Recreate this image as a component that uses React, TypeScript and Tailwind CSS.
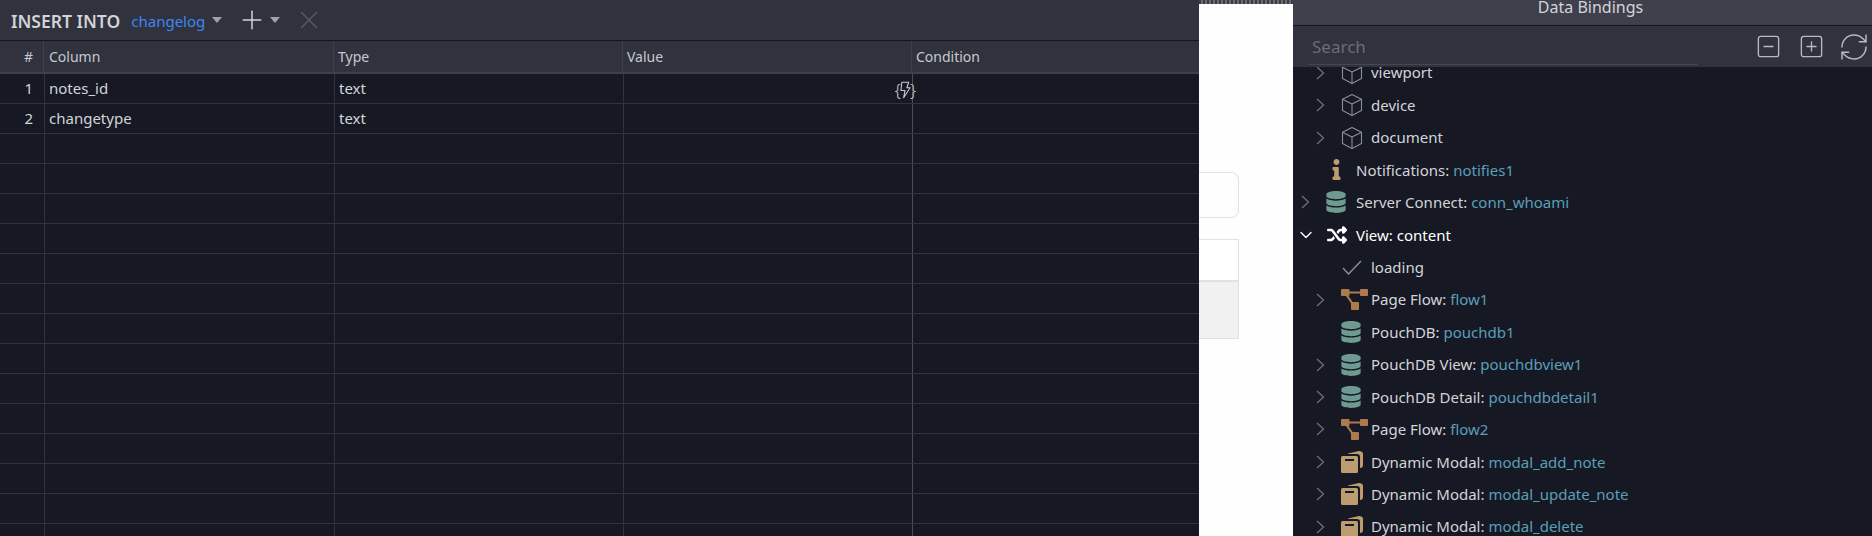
import { ChevronDown, Plus, RefreshCw, SquareMinus, SquarePlus, X } from 'lucide-react';
import { FaDatabase, FaInfo } from 'react-icons/fa';
import { FaShuffle } from 'react-icons/fa6';

type Kind = 'cube' | 'info' | 'db' | 'shuffle' | 'check' | 'flow' | 'modal';

type TreeItem = {
  label: string;
  name?: string;
  kind: Kind;
  level: 0 | 1;
  arrow?: boolean;
  open?: boolean;
};

const treeItems: TreeItem[] = [
  { label: 'viewport', kind: 'cube', level: 1, arrow: true },
  { label: 'device', kind: 'cube', level: 1, arrow: true },
  { label: 'document', kind: 'cube', level: 1, arrow: true },
  { label: 'Notifications: ', name: 'notifies1', kind: 'info', level: 0 },
  { label: 'Server Connect: ', name: 'conn_whoami', kind: 'db', level: 0, arrow: true },
  { label: 'View: content', kind: 'shuffle', level: 0, arrow: true, open: true },
  { label: 'loading', kind: 'check', level: 1 },
  { label: 'Page Flow: ', name: 'flow1', kind: 'flow', level: 1, arrow: true },
  { label: 'PouchDB: ', name: 'pouchdb1', kind: 'db', level: 1 },
  { label: 'PouchDB View: ', name: 'pouchdbview1', kind: 'db', level: 1, arrow: true },
  { label: 'PouchDB Detail: ', name: 'pouchdbdetail1', kind: 'db', level: 1, arrow: true },
  { label: 'Page Flow: ', name: 'flow2', kind: 'flow', level: 1, arrow: true },
  { label: 'Dynamic Modal: ', name: 'modal_add_note', kind: 'modal', level: 1, arrow: true },
  { label: 'Dynamic Modal: ', name: 'modal_update_note', kind: 'modal', level: 1, arrow: true },
  { label: 'Dynamic Modal: ', name: 'modal_delete', kind: 'modal', level: 1, arrow: true },
];

const rows = Array.from({ length: 16 }, (_, i) => {
  if (i === 0) return { no: '1', column: 'notes_id', type: 'text' };
  if (i === 1) return { no: '2', column: 'changetype', type: 'text' };
  return { no: '', column: '', type: '' };
});

function Caret({ className }: { className: string }) {
  return (
    <svg viewBox="0 0 10 6" className={className} fill="currentColor">
      <path d="M0 0h10L5 6z" />
    </svg>
  );
}

function ChevronRightThin() {
  return (
    <svg viewBox="0 0 9 14" className="h-[14px] w-[9px] text-[#6d6f78]" fill="none" stroke="currentColor" strokeWidth="1.3">
      <path d="M1 1l6.500 6L1 13" />
    </svg>
  );
}

function CubeIcon() {
  return (
    <svg viewBox="0 0 22 24" className="h-[24px] w-[22px] text-[#8d8f96]" fill="none" stroke="currentColor" strokeWidth="1.1" strokeLinejoin="round">
      <path d="M11 1.500l9.500 4.700v11.400L11 22.500l-9.500-4.900V6.200z" />
      <path d="M1.500 6.200L11 11l9.500-4.800M11 11v11.500" />
    </svg>
  );
}

function FlowIcon() {
  return (
    <svg viewBox="0 0 27 21" className="h-[21px] w-[27px] text-[#ad7a4d]" fill="currentColor">
      <rect x="0" y="0" width="8.500" height="7" rx="1" />
      <rect x="19" y="0" width="8" height="7" rx="1" />
      <rect x="10" y="13" width="8" height="8" rx="1" />
      <path d="M8 2.500h11V4.500H8zM5 7h2.500l4.500 6.500-1.500 1.500z" />
    </svg>
  );
}

function ModalIcon() {
  return (
    <svg viewBox="0 0 22 22" className="h-[22px] w-[22px] text-[#bd9c70]" fill="currentColor">
      <path d="M7 2.500L18 0c2 0 4 .8 4 3v11c0 2-1 3-3 3V6c0-2-1-3-3-3H7z" />
      <rect x="0" y="5" width="17" height="17" rx="1.500" />
      <rect x="4" y="8" width="9" height="2" fill="#161924" />
    </svg>
  );
}

function TreeIcon({ kind }: { kind: Kind }) {
  switch (kind) {
    case 'cube':
      return <CubeIcon />;
    case 'info':
      return <FaInfo className="ml-[5px] h-[21px] w-[11px] text-[#bd9c70]" />;
    case 'db':
      return <FaDatabase className="h-[22px] w-[20px] text-[#6f9a92]" />;
    case 'shuffle':
      return <FaShuffle className="h-[20px] w-[22px] text-white" />;
    case 'check':
      return (
        <svg viewBox="0 0 20 15" className="ml-[1px] h-[15px] w-[20px] text-[#8d8f96]" fill="none" stroke="currentColor" strokeWidth="1.4">
          <path d="M1 8l5.500 6L19 1" />
        </svg>
      );
    case 'flow':
      return <FlowIcon />;
    case 'modal':
      return <ModalIcon />;
  }
}

function TreeRow({ item }: { item: TreeItem }) {
  return (
    <div className={`flex h-[32.43px] shrink-0 items-center ${item.level === 1 ? 'pl-[23px]' : 'pl-[8px]'}`}>
      <div className="flex w-[25px] shrink-0 items-center">
        {item.open ? (
          <ChevronDown className="-ml-[5px] h-[20px] w-[20px] text-white" strokeWidth={1.6} />
        ) : item.arrow ? (
          <ChevronRightThin />
        ) : null}
      </div>
      <div className="flex w-[30px] shrink-0 items-center">
        <TreeIcon kind={item.kind} />
      </div>
      <span className={`whitespace-pre text-[15px] ${item.open ? 'text-white' : 'text-[#d3d4d8]'}`}>
        {item.label}
        {item.name && <span className="text-[#5b9fb8]">{item.name}</span>}
      </span>
    </div>
  );
}

export default function App() {
  return (
    <div className="flex h-[536px] w-[1872px] overflow-hidden bg-white font-['Noto_Sans',sans-serif]">
      <section className="flex w-[1199px] shrink-0 flex-col bg-[#161924]">
        <div className="flex h-[41px] shrink-0 items-center border-b border-[#14161d] bg-[#30323e] pl-[11px] pt-[2px]">
          <span className="text-[17.5px] font-semibold text-[#d3d4d8]">INSERT INTO</span>
          <span className="ml-[11px] text-[15px] text-[#3f86f0]">changelog</span>
          <Caret className="-mt-[2px] ml-[7px] h-[6px] w-[10px] text-[#a0a2a8]" />
          <Plus className="-mt-[2px] ml-[15px] h-[30px] w-[30px] text-[#d3d4d8]" strokeWidth={1.2} />
          <Caret className="-mt-[2px] ml-[3px] h-[6px] w-[10px] text-[#a0a2a8]" />
          <X className="-mt-[2px] ml-[14px] h-[30px] w-[30px] text-[#565862]" strokeWidth={1.2} />
        </div>
        <div className="grid h-[33px] shrink-0 grid-cols-[44px_290px_289px_289px_1fr] border-b-2 border-[#3e404c] bg-[#30323e] text-[14px] text-[#c8c9ce]">
          <div className="flex items-center justify-end border-r border-[#3e404c] pr-[10px]">#</div>
          <div className="flex items-center border-r border-[#3e404c] pl-[5px]">Column</div>
          <div className="flex items-center border-r border-[#3e404c] pl-[4px]">Type</div>
          <div className="flex items-center border-r border-[#3e404c] pl-[4px]">Value</div>
          <div className="flex items-center pl-[4px]">Condition</div>
        </div>
        <div className="flex min-h-0 flex-1 flex-col overflow-hidden">
          {rows.map((row, i) => (
            <div
              key={i}
              className="grid h-[30px] shrink-0 grid-cols-[45px_290px_289px_289px_1fr] border-b border-[#30323d] text-[15px] text-[#d3d4d8]"
            >
              <div className="flex items-center justify-end border-r border-[#30323d] pr-[11px]">{row.no}</div>
              <div className="flex items-center border-r border-[#30323d] pl-[4px]">{row.column}</div>
              <div className="flex items-center border-r border-[#30323d] pl-[4px]">{row.type}</div>
              <div className="relative border-r border-[#4a4c56]">
                {i === 0 && (
                  <span className="absolute -right-[4px] top-[5px] flex items-center text-[17px] font-light leading-[22px] text-[#c8c9ce]">
                    <span className="-mr-[1px]">{'{'}</span>
                    <svg viewBox="0 0 12 18" className="h-[18px] w-[11px]" fill="none" stroke="currentColor" strokeWidth="1.2" strokeLinejoin="round">
                      <path d="M2 .6h7.500L7.500 6.500H11L4 17.400 5.500 9.500H1z" />
                    </svg>
                    <span className="-ml-[1px]">{'}'}</span>
                  </span>
                )}
              </div>
              <div />
            </div>
          ))}
        </div>
      </section>

      <section className="flex w-[94px] shrink-0 flex-col bg-[#fefefe]">
        <div className="h-[4px] bg-[repeating-linear-gradient(90deg,#3a3c46_0_2px,#6a6c74_2px_4px)]" />
        <div className="mt-[168px] h-[46px] w-[40px] rounded-r-[8px] border-y border-r border-[#dee2e6]" />
        <div className="mt-[21px] flex h-[100px] w-[40px] flex-col border-y border-r border-[#dee2e6]">
          <div className="h-[42px] border-b-2 border-[#dee2e6] bg-white" />
          <div className="flex-1 bg-[#f1f1f1]" />
        </div>
      </section>

      <section className="flex min-w-0 flex-1 flex-col bg-[#161924]">
        <div className="flex h-[26px] shrink-0 items-start justify-center border-b border-[#14161d] bg-[#3e404c] pl-[16px] text-[16px] leading-[15px] text-[#d3d4d8]">
          Data Bindings
        </div>
        <div className="flex h-[41px] shrink-0 items-center bg-[#30323e] pl-[16px]">
          <div className="mt-[1px] h-[35px] w-[389px] border-b border-[#454751] pl-[3px] text-[17px] leading-[34px] text-[#6b6d76]">
            Search
          </div>
          <SquareMinus className="ml-[57px] h-[27px] w-[27px] shrink-0 text-[#b9bac0]" strokeWidth={1.2} />
          <SquarePlus className="ml-[16px] h-[27px] w-[27px] shrink-0 text-[#b9bac0]" strokeWidth={1.2} />
          <RefreshCw className="ml-[13px] h-[32px] w-[32px] shrink-0 text-[#b9bac0]" strokeWidth={1.1} />
        </div>
        <div className="flex min-h-0 flex-1 flex-col overflow-hidden">
          <div className="-mt-[10.5px] flex flex-col">
            {treeItems.map((item) => (
              <TreeRow key={item.label + (item.name ?? '')} item={item} />
            ))}
          </div>
        </div>
      </section>
    </div>
  );
}
